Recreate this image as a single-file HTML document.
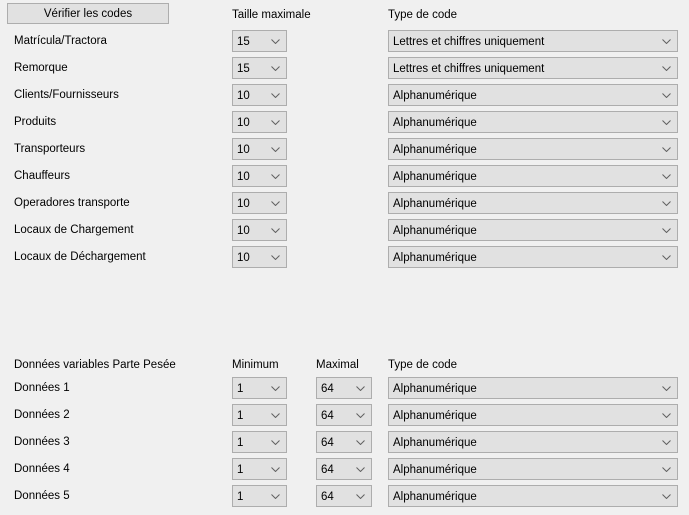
<!DOCTYPE html>
<html><head><meta charset="utf-8"><style>
body{margin:0;width:689px;height:515px;background:#f0f0f0;font-family:"Liberation Sans",sans-serif;font-size:11.5px;color:#000;position:relative;overflow:hidden}
.a{position:absolute;white-space:nowrap;margin-top:1px}
.l{position:absolute;left:14px;line-height:14px;margin-top:1px}
.c{position:absolute;height:20px;border:1px solid #adadad;background:#e1e1e1;box-sizing:content-box}
.c span{position:absolute;left:4px;top:4px;line-height:14px}
.c svg{position:absolute;right:6px;top:8px}
.btn{position:absolute;left:7px;top:3px;width:160px;height:19px;border:1px solid #adadad;background:#e1e1e1;text-align:center;line-height:20px}
</style></head><body>
<div class="btn">Vérifier les codes</div>
<div class="a" style="left:232px;top:8px">Taille maximale</div>
<div class="a" style="left:388px;top:8px">Type de code</div>

<div class="l" style="top:33px">Matrícula/Tractora</div>
<div class="l" style="top:60px">Remorque</div>
<div class="l" style="top:87px">Clients/Fournisseurs</div>
<div class="l" style="top:114px">Produits</div>
<div class="l" style="top:141px">Transporteurs</div>
<div class="l" style="top:168px">Chauffeurs</div>
<div class="l" style="top:195px">Operadores transporte</div>
<div class="l" style="top:222px">Locaux de Chargement</div>
<div class="l" style="top:249px">Locaux de Déchargement</div>

<div class="c" style="left:232px;top:30px;width:53px"><span>15</span><svg width="9" height="5"><path d="M0.5 0.5L4.5 4.5L8.5 0.5" fill="none" stroke="#606060"/></svg></div>
<div class="c" style="left:232px;top:57px;width:53px"><span>15</span><svg width="9" height="5"><path d="M0.5 0.5L4.5 4.5L8.5 0.5" fill="none" stroke="#606060"/></svg></div>
<div class="c" style="left:232px;top:84px;width:53px"><span>10</span><svg width="9" height="5"><path d="M0.5 0.5L4.5 4.5L8.5 0.5" fill="none" stroke="#606060"/></svg></div>
<div class="c" style="left:232px;top:111px;width:53px"><span>10</span><svg width="9" height="5"><path d="M0.5 0.5L4.5 4.5L8.5 0.5" fill="none" stroke="#606060"/></svg></div>
<div class="c" style="left:232px;top:138px;width:53px"><span>10</span><svg width="9" height="5"><path d="M0.5 0.5L4.5 4.5L8.5 0.5" fill="none" stroke="#606060"/></svg></div>
<div class="c" style="left:232px;top:165px;width:53px"><span>10</span><svg width="9" height="5"><path d="M0.5 0.5L4.5 4.5L8.5 0.5" fill="none" stroke="#606060"/></svg></div>
<div class="c" style="left:232px;top:192px;width:53px"><span>10</span><svg width="9" height="5"><path d="M0.5 0.5L4.5 4.5L8.5 0.5" fill="none" stroke="#606060"/></svg></div>
<div class="c" style="left:232px;top:219px;width:53px"><span>10</span><svg width="9" height="5"><path d="M0.5 0.5L4.5 4.5L8.5 0.5" fill="none" stroke="#606060"/></svg></div>
<div class="c" style="left:232px;top:246px;width:53px"><span>10</span><svg width="9" height="5"><path d="M0.5 0.5L4.5 4.5L8.5 0.5" fill="none" stroke="#606060"/></svg></div>

<div class="c" style="left:388px;top:30px;width:288px"><span>Lettres et chiffres uniquement</span><svg width="9" height="5"><path d="M0.5 0.5L4.5 4.5L8.5 0.5" fill="none" stroke="#606060"/></svg></div>
<div class="c" style="left:388px;top:57px;width:288px"><span>Lettres et chiffres uniquement</span><svg width="9" height="5"><path d="M0.5 0.5L4.5 4.5L8.5 0.5" fill="none" stroke="#606060"/></svg></div>
<div class="c" style="left:388px;top:84px;width:288px"><span>Alphanumérique</span><svg width="9" height="5"><path d="M0.5 0.5L4.5 4.5L8.5 0.5" fill="none" stroke="#606060"/></svg></div>
<div class="c" style="left:388px;top:111px;width:288px"><span>Alphanumérique</span><svg width="9" height="5"><path d="M0.5 0.5L4.5 4.5L8.5 0.5" fill="none" stroke="#606060"/></svg></div>
<div class="c" style="left:388px;top:138px;width:288px"><span>Alphanumérique</span><svg width="9" height="5"><path d="M0.5 0.5L4.5 4.5L8.5 0.5" fill="none" stroke="#606060"/></svg></div>
<div class="c" style="left:388px;top:165px;width:288px"><span>Alphanumérique</span><svg width="9" height="5"><path d="M0.5 0.5L4.5 4.5L8.5 0.5" fill="none" stroke="#606060"/></svg></div>
<div class="c" style="left:388px;top:192px;width:288px"><span>Alphanumérique</span><svg width="9" height="5"><path d="M0.5 0.5L4.5 4.5L8.5 0.5" fill="none" stroke="#606060"/></svg></div>
<div class="c" style="left:388px;top:219px;width:288px"><span>Alphanumérique</span><svg width="9" height="5"><path d="M0.5 0.5L4.5 4.5L8.5 0.5" fill="none" stroke="#606060"/></svg></div>
<div class="c" style="left:388px;top:246px;width:288px"><span>Alphanumérique</span><svg width="9" height="5"><path d="M0.5 0.5L4.5 4.5L8.5 0.5" fill="none" stroke="#606060"/></svg></div>

<div class="a" style="left:14px;top:358px">Données variables Parte Pesée</div>
<div class="a" style="left:232px;top:358px">Minimum</div>
<div class="a" style="left:316px;top:358px">Maximal</div>
<div class="a" style="left:388px;top:358px">Type de code</div>

<div class="l" style="top:380px">Données 1</div>
<div class="l" style="top:407px">Données 2</div>
<div class="l" style="top:434px">Données 3</div>
<div class="l" style="top:461px">Données 4</div>
<div class="l" style="top:488px">Données 5</div>

<div class="c" style="left:232px;top:377px;width:53px"><span>1</span><svg width="9" height="5"><path d="M0.5 0.5L4.5 4.5L8.5 0.5" fill="none" stroke="#606060"/></svg></div>
<div class="c" style="left:232px;top:404px;width:53px"><span>1</span><svg width="9" height="5"><path d="M0.5 0.5L4.5 4.5L8.5 0.5" fill="none" stroke="#606060"/></svg></div>
<div class="c" style="left:232px;top:431px;width:53px"><span>1</span><svg width="9" height="5"><path d="M0.5 0.5L4.5 4.5L8.5 0.5" fill="none" stroke="#606060"/></svg></div>
<div class="c" style="left:232px;top:458px;width:53px"><span>1</span><svg width="9" height="5"><path d="M0.5 0.5L4.5 4.5L8.5 0.5" fill="none" stroke="#606060"/></svg></div>
<div class="c" style="left:232px;top:485px;width:53px"><span>1</span><svg width="9" height="5"><path d="M0.5 0.5L4.5 4.5L8.5 0.5" fill="none" stroke="#606060"/></svg></div>

<div class="c" style="left:316px;top:377px;width:54px"><span>64</span><svg width="9" height="5"><path d="M0.5 0.5L4.5 4.5L8.5 0.5" fill="none" stroke="#606060"/></svg></div>
<div class="c" style="left:316px;top:404px;width:54px"><span>64</span><svg width="9" height="5"><path d="M0.5 0.5L4.5 4.5L8.5 0.5" fill="none" stroke="#606060"/></svg></div>
<div class="c" style="left:316px;top:431px;width:54px"><span>64</span><svg width="9" height="5"><path d="M0.5 0.5L4.5 4.5L8.5 0.5" fill="none" stroke="#606060"/></svg></div>
<div class="c" style="left:316px;top:458px;width:54px"><span>64</span><svg width="9" height="5"><path d="M0.5 0.5L4.5 4.5L8.5 0.5" fill="none" stroke="#606060"/></svg></div>
<div class="c" style="left:316px;top:485px;width:54px"><span>64</span><svg width="9" height="5"><path d="M0.5 0.5L4.5 4.5L8.5 0.5" fill="none" stroke="#606060"/></svg></div>

<div class="c" style="left:388px;top:377px;width:288px"><span>Alphanumérique</span><svg width="9" height="5"><path d="M0.5 0.5L4.5 4.5L8.5 0.5" fill="none" stroke="#606060"/></svg></div>
<div class="c" style="left:388px;top:404px;width:288px"><span>Alphanumérique</span><svg width="9" height="5"><path d="M0.5 0.5L4.5 4.5L8.5 0.5" fill="none" stroke="#606060"/></svg></div>
<div class="c" style="left:388px;top:431px;width:288px"><span>Alphanumérique</span><svg width="9" height="5"><path d="M0.5 0.5L4.5 4.5L8.5 0.5" fill="none" stroke="#606060"/></svg></div>
<div class="c" style="left:388px;top:458px;width:288px"><span>Alphanumérique</span><svg width="9" height="5"><path d="M0.5 0.5L4.5 4.5L8.5 0.5" fill="none" stroke="#606060"/></svg></div>
<div class="c" style="left:388px;top:485px;width:288px"><span>Alphanumérique</span><svg width="9" height="5"><path d="M0.5 0.5L4.5 4.5L8.5 0.5" fill="none" stroke="#606060"/></svg></div>
</body></html>
